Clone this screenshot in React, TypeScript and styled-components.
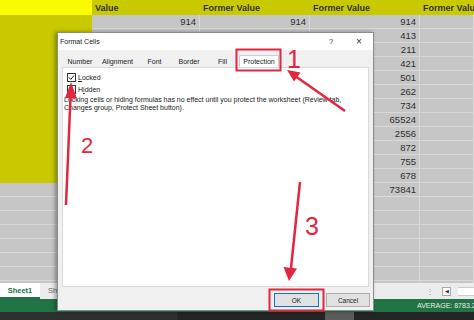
import React from 'react';
import styled, { createGlobalStyle } from 'styled-components';

const GlobalStyle = createGlobalStyle`
  html, body {
    margin: 0;
    padding: 0;
    background: #262626;
  }
  body {
    width: 474px;
    height: 320px;
    overflow: hidden;
  }
`;

const RED = '#e3263f';
const GREEN = '#217346';

const values = ['914', '413', '211', '421', '501', '262', '734', '65524', '2556', '872', '755', '678', '73841'];
const ROW_COUNT = 20;
const OLIVE_ROWS = 12;

const tabs = [
    { label: 'Number', width: 36 },
    { label: 'Alignment', width: 39 },
    { label: 'Font', width: 35 },
    { label: 'Border', width: 34 },
    { label: 'Fill', width: 33 },
    { label: 'Protection', width: 40, active: true },
];

const Screen = styled.div`
    position: relative;
    width: 474px;
    height: 320px;
    overflow: hidden;
    display: flex;
    flex-direction: column;
    font-family: 'Liberation Sans', Arial, sans-serif;
`;

const SheetGrid = styled.div`
    flex: 1;
    min-height: 0;
    overflow: hidden;
    display: grid;
    grid-template-columns: 92px 108px 110px 110px 1fr;
    grid-template-rows: 15px;
    grid-auto-rows: 14px;
    background: #c6c6c6;
`;

const HeaderCell = styled.div<{ $corner?: boolean }>`
    background: ${(p) => (p.$corner ? '#fbfb00' : '#c9c900')};
    color: #333;
    font-size: 9px;
    font-weight: bold;
    padding-left: 3px;
    display: flex;
    align-items: center;
    white-space: nowrap;
    overflow: hidden;
`;

const Cell = styled.div<{ $olive?: boolean }>`
    box-sizing: border-box;
    background: ${(p) => (p.$olive ? '#c9c900' : '#c6c6c6')};
    border-right: 1px solid ${(p) => (p.$olive ? '#c9c900' : '#d9d9d9')};
    border-bottom: 1px solid ${(p) => (p.$olive ? '#c9c900' : '#d9d9d9')};
    color: #2e2e2e;
    font-size: 9.5px;
    display: flex;
    align-items: center;
    justify-content: flex-end;
    padding-right: 3px;
`;

const TabBar = styled.div`
    flex: none;
    height: 16px;
    display: flex;
    align-items: stretch;
    background: #ececec;
`;

const SheetTab = styled.div<{ $active?: boolean }>`
    box-sizing: border-box;
    width: 40px;
    display: flex;
    align-items: center;
    justify-content: ${(p) => (p.$active ? 'center' : 'flex-start')};
    padding-left: ${(p) => (p.$active ? '0' : '8px')};
    font-size: 7.5px;
    font-weight: ${(p) => (p.$active ? 'bold' : 'normal')};
    color: ${(p) => (p.$active ? GREEN : '#666')};
    background: ${(p) => (p.$active ? '#fff' : 'transparent')};
    border-bottom: 2px solid ${(p) => (p.$active ? GREEN : 'transparent')};
`;

const ScrollZone = styled.div`
    margin-left: auto;
    display: flex;
    align-items: center;
    gap: 7px;
`;

const Dots = styled.span`
    width: 10px;
    text-align: center;
    font-size: 8px;
    color: #999;
`;

const ArrowBox = styled.div`
    box-sizing: border-box;
    width: 9px;
    height: 9px;
    border: 1px solid #aaa;
    background: #fff;
    display: flex;
    align-items: center;
    justify-content: center;
    font-size: 5px;
    color: #333;
`;

const Track = styled.div`
    width: 16px;
    height: 9px;
    background: #fff;
    border-top: 1px solid #ccc;
    border-bottom: 1px solid #ccc;
    box-sizing: border-box;
`;

const StatusBar = styled.div`
    flex: none;
    height: 13px;
    background: ${GREEN};
    display: grid;
    grid-template-columns: 1fr 57px;
    align-items: center;
`;

const StatusText = styled.span`
    grid-column: 2;
    white-space: nowrap;
    overflow: hidden;
    font-size: 7px;
    color: #e6efe9;
`;

const Taskbar = styled.div`
    flex: none;
    height: 8px;
    display: grid;
    grid-template-columns: 177px 148px 29px 1fr;
`;

const TaskSlot = styled.div<{ $tone: string }>`
    background: ${(p) => p.$tone};
`;

/* modal dialog sits over the sheet */
const Dialog = styled.div`
    position: absolute;
    left: 57px;
    top: 32px;
    width: 317px;
    height: 279px;
    box-sizing: border-box;
    border: 1px solid #8c8c8c;
    background: #f0f0f0;
    box-shadow: -2px 0 4px rgba(0, 0, 0, 0.35);
    display: flex;
    flex-direction: column;
    color: #1a1a1a;
`;

const TitleBar = styled.div`
    flex: none;
    height: 17px;
    background: #fff;
    display: flex;
    align-items: center;
    padding-left: 2px;
`;

const Title = styled.span`
    font-size: 7px;
    flex: 1;
`;

const TitleButton = styled.span<{ $size: number }>`
    width: 28px;
    text-align: center;
    font-size: ${(p) => p.$size}px;
    color: #333;
`;

const TabStrip = styled.div`
    flex: none;
    height: 17px;
    display: flex;
    align-items: flex-end;
    padding-left: 4px;
`;

const Tab = styled.div<{ $active?: boolean }>`
    box-sizing: border-box;
    height: 12px;
    display: flex;
    align-items: center;
    justify-content: center;
    font-size: 7px;
    color: #222;
    background: ${(p) => (p.$active ? '#fff' : 'transparent')};
    border: 1px solid ${(p) => (p.$active ? '#cfcfcf' : 'transparent')};
    border-bottom: none;
`;

const Panel = styled.div`
    flex: none;
    height: 220px;
    margin: 0 4px;
    box-sizing: border-box;
    background: #fff;
    border: 1px solid #dadada;
    padding: 4px 4px 0 1px;
    display: flex;
    flex-direction: column;
    gap: 2px;
`;

const CheckRow = styled.label`
    display: flex;
    align-items: center;
    gap: 2px;
    height: 10px;
    padding-left: 3px;
    font-size: 7px;
    color: #222;
`;

const Box = styled.span`
    box-sizing: border-box;
    width: 9px;
    height: 9px;
    border: 1px solid #333;
    background: #fff;
    display: flex;
    align-items: center;
    justify-content: center;
`;

const Description = styled.p`
    margin: 0;
    font-size: 7px;
    line-height: 7.5px;
    color: #222;
    white-space: nowrap;
`;

const Footer = styled.div`
    flex: 1;
    display: flex;
    align-items: center;
    justify-content: flex-end;
    gap: 7px;
    padding: 3px 3px 0 0;
`;

const Button = styled.button<{ $primary?: boolean; $w: number }>`
    box-sizing: border-box;
    width: ${(p) => p.$w}px;
    height: 14px;
    padding: 0;
    font-family: inherit;
    font-size: 6.5px;
    color: #222;
    background: #e1e1e1;
    border: 1px solid ${(p) => (p.$primary ? '#0078d7' : '#adadad')};
`;

const Overlay = styled.svg`
    position: absolute;
    inset: 0;
    pointer-events: none;
    font-family: 'Liberation Sans', Arial, sans-serif;
`;

const Check = () => (
    <svg width="7" height="7" viewBox="0 0 7 7">
        <path d="M1 3.6 L2.8 5.4 L6 1.4" fill="none" stroke="#222" strokeWidth="1" />
    </svg>
);

const Annotations = () => (
    <Overlay width="474" height="320" viewBox="0 0 474 320">
        <rect x="236.5" y="49.5" width="44" height="21" fill="none" stroke={RED} strokeWidth="2" />
        <text x="287" y="68" fontSize="25" fill={RED}>1</text>
        <line x1="345" y1="111" x2="293" y2="74.5" stroke={RED} strokeWidth="2.5" />
        <polygon points="287,70 300.5,72.5 294,81.5" fill={RED} />

        <line x1="66" y1="205" x2="70.6" y2="95" stroke={RED} strokeWidth="2.5" />
        <polygon points="71,82 65,98 77,98.4" fill={RED} />
        <text x="81" y="153" fontSize="22" fill={RED}>2</text>

        <text x="305" y="235" fontSize="25" fill={RED}>3</text>
        <line x1="300" y1="182" x2="291" y2="268" stroke={RED} strokeWidth="2.5" />
        <polygon points="289,281 283.5,267 297,268.5" fill={RED} />
        <rect x="269.5" y="289.5" width="54" height="21" fill="none" stroke={RED} strokeWidth="2" />
    </Overlay>
);

const App: React.FC = () => {
    const rows = Array.from({ length: ROW_COUNT }, (_, i) => i);

    return (
        <>
            <GlobalStyle />
            <Screen>
                <SheetGrid>
                    <HeaderCell $corner />
                    <HeaderCell>Value</HeaderCell>
                    <HeaderCell>Former Value</HeaderCell>
                    <HeaderCell>Former Value</HeaderCell>
                    <HeaderCell>Former Value</HeaderCell>
                    {rows.map((r) => (
                        <React.Fragment key={r}>
                            <Cell $olive={r < OLIVE_ROWS} />
                            <Cell>{values[r]}</Cell>
                            <Cell>{values[r]}</Cell>
                            <Cell>{values[r]}</Cell>
                            <Cell />
                        </React.Fragment>
                    ))}
                </SheetGrid>

                <TabBar>
                    <SheetTab $active>Sheet1</SheetTab>
                    <SheetTab>Sheet2</SheetTab>
                    <ScrollZone>
                        <Dots>⋮</Dots>
                        <ArrowBox>◀</ArrowBox>
                        <Track />
                    </ScrollZone>
                </TabBar>
                <StatusBar>
                    <StatusText>AVERAGE: 8783.230769</StatusText>
                </StatusBar>
                <Taskbar>
                    <TaskSlot $tone="#2f2f2f" />
                    <TaskSlot $tone="#252525" />
                    <TaskSlot $tone="#5b5b5b" />
                    <TaskSlot $tone="#252525" />
                </Taskbar>

                <Dialog>
                    <TitleBar>
                        <Title>Format Cells</Title>
                        <TitleButton $size={7.5}>?</TitleButton>
                        <TitleButton $size={10}>×</TitleButton>
                    </TitleBar>
                    <TabStrip>
                        {tabs.map((t) => (
                            <Tab key={t.label} $active={t.active} style={{ width: t.width }}>
                                {t.label}
                            </Tab>
                        ))}
                    </TabStrip>
                    <Panel>
                        <CheckRow>
                            <Box>
                                <Check />
                            </Box>
                            <span>
                                <u>L</u>ocked
                            </span>
                        </CheckRow>
                        <CheckRow>
                            <Box />
                            <span>
                                H<u>i</u>dden
                            </span>
                        </CheckRow>
                        <Description>
                            Locking cells or hiding formulas has no effect until you protect the worksheet (Review tab,
                            <br />
                            Changes group, Protect Sheet button).
                        </Description>
                    </Panel>
                    <Footer>
                        <Button $primary $w={45}>OK</Button>
                        <Button $w={44}>Cancel</Button>
                    </Footer>
                </Dialog>

                <Annotations />
            </Screen>
        </>
    );
};

export default App;
